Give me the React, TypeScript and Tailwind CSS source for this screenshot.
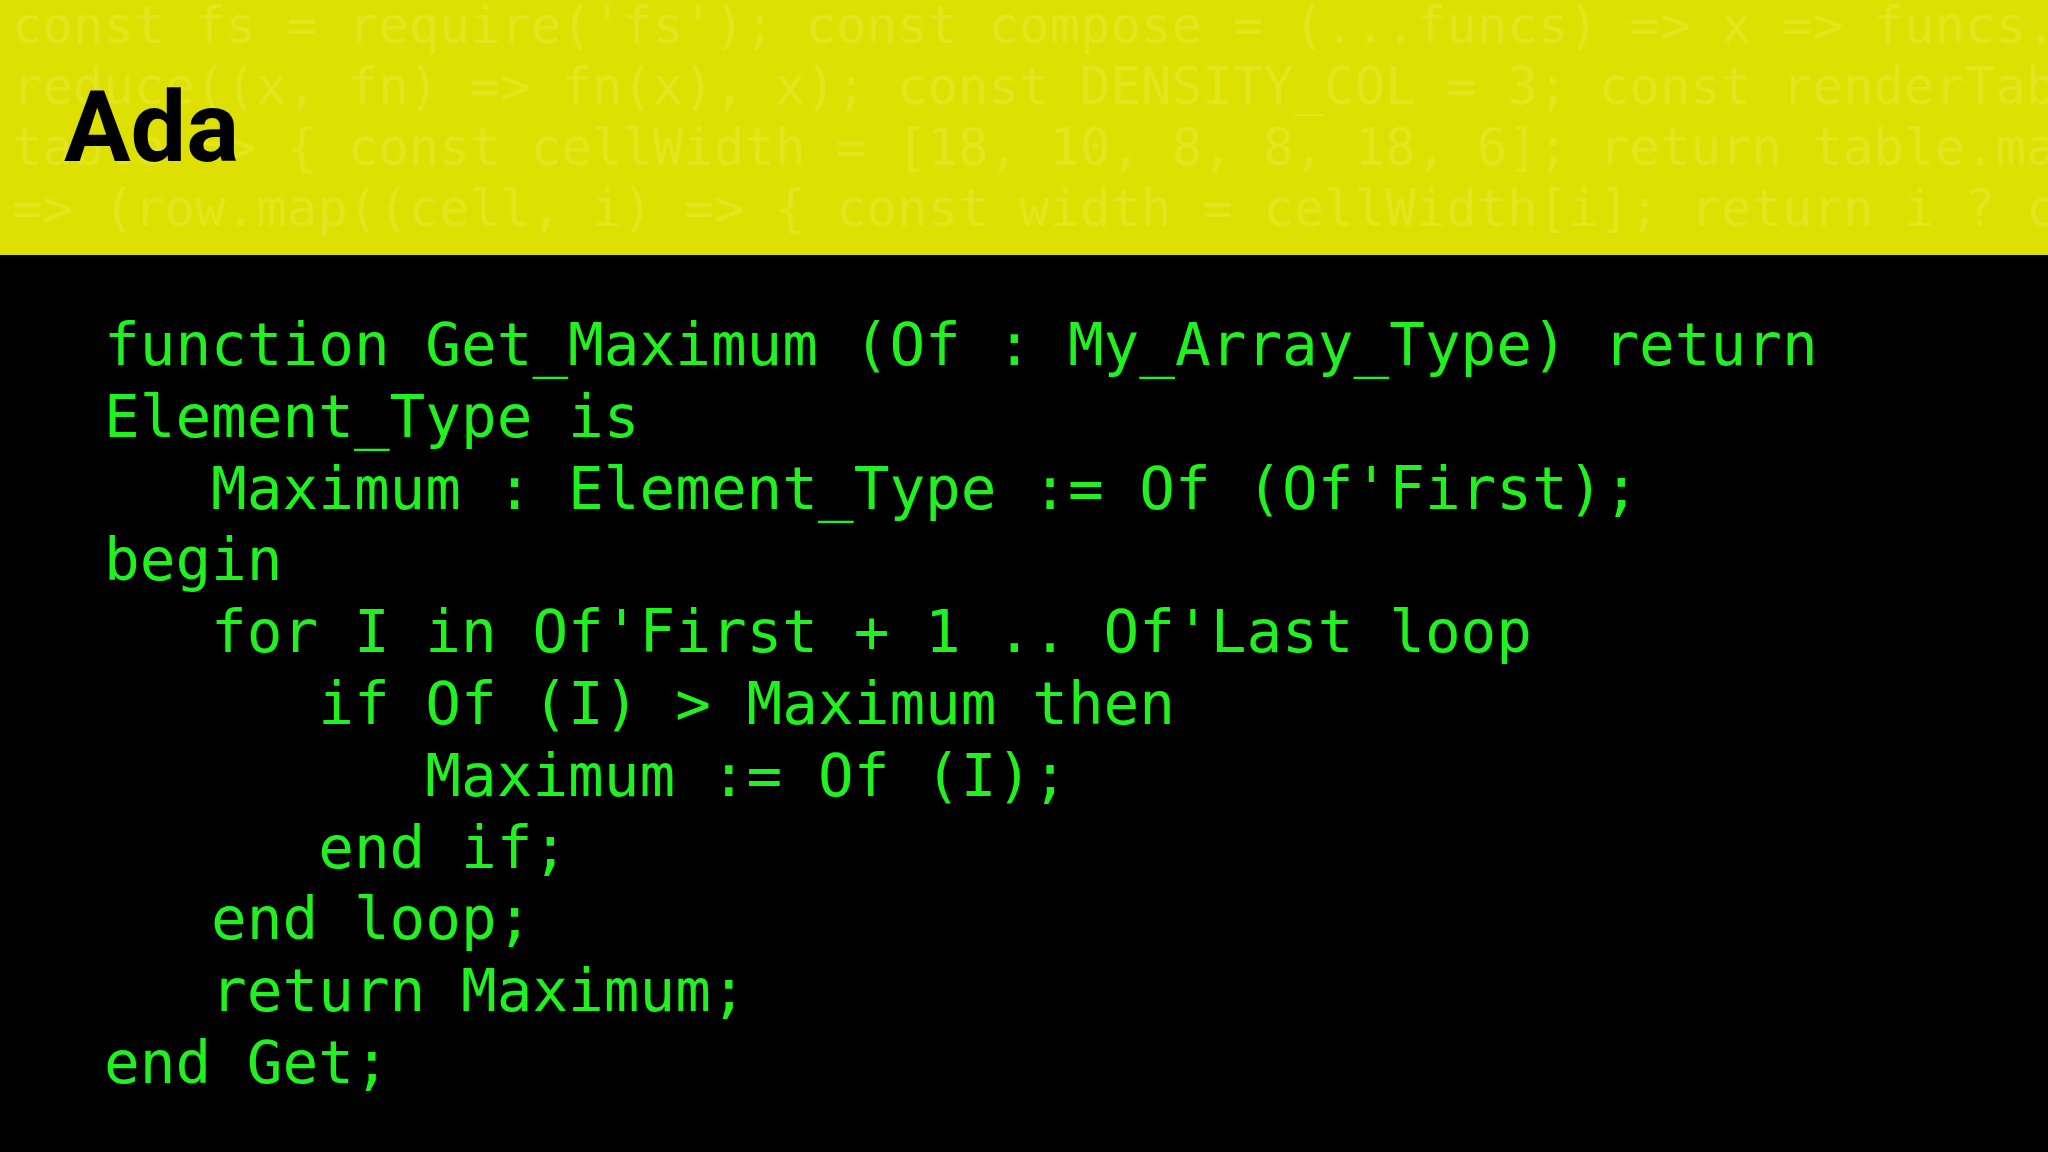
const bgLines = [
  "const fs = require('fs'); const compose = (...funcs) => x => funcs.reduceRight((acc, fn) => fn(acc), x);",
  "reduce((x, fn) => fn(x), x); const DENSITY_COL = 3; const renderTable = (table) => table;",
  "table => { const cellWidth = [18, 10, 8, 8, 18, 6]; return table.map(row => row);",
  "=> (row.map((cell, i) => { const width = cellWidth[i]; return i ? cell : cell; })",
];

const code = [
  "function Get_Maximum (Of : My_Array_Type) return",
  "Element_Type is",
  "   Maximum : Element_Type := Of (Of'First);",
  "begin",
  "   for I in Of'First + 1 .. Of'Last loop",
  "      if Of (I) > Maximum then",
  "         Maximum := Of (I);",
  "      end if;",
  "   end loop;",
  "   return Maximum;",
  "end Get;",
];

export default function App() {
  return (
    <div className="w-[2048px] h-[1152px] bg-black overflow-hidden flex flex-col">
      {/* header */}
      <div className="relative h-[255px] shrink-0 bg-[#dde000] overflow-hidden">
        <div className="absolute inset-0 -top-[5px] left-[12px] font-['DejaVu_Sans_Mono',monospace] text-[50.7px] leading-[61px] text-[#e3e51e] whitespace-pre">
          {bgLines.map((l, i) => (
            <div key={i}>{l}</div>
          ))}
        </div>
        <div className="relative pt-[78px] pl-[64px] font-['Roboto',sans-serif] font-bold text-[99px] leading-[98px] text-black">
          Ada
        </div>
      </div>

      {/* code */}
      <div className="pt-[54px] pl-[104px] font-['DejaVu_Sans_Mono',monospace] text-[59.3px] leading-[71.8px] text-[#1ff21f] whitespace-pre">
        {code.map((l, i) => (
          <div key={i}>{l}</div>
        ))}
      </div>
    </div>
  );
}
